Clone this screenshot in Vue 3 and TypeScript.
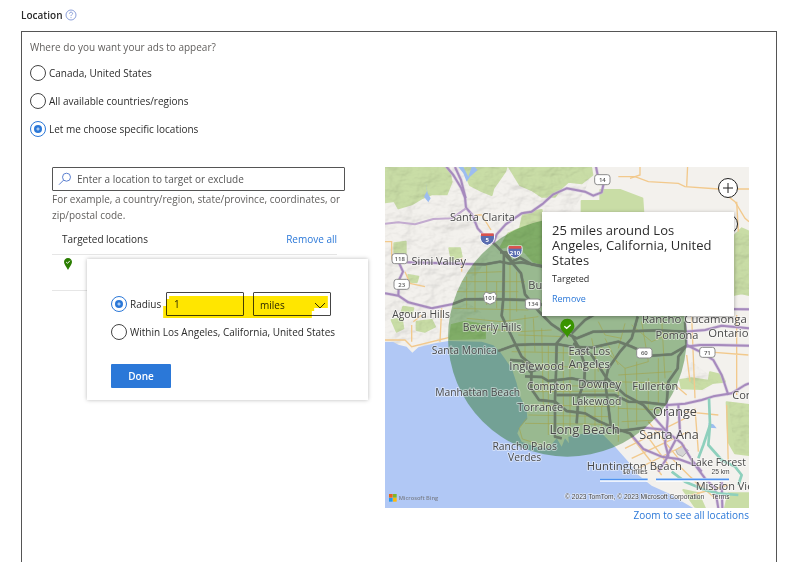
<script setup lang="ts">
import { ref } from 'vue'

type Label = { text: string; x: number; y: number; size: number; anchor?: 'start' | 'middle' }
type Shield = { text: string; x: number; y: number }

const scope = ref<'default' | 'all' | 'specific'>('specific')
const areaType = ref<'radius' | 'within'>('radius')
const query = ref('')
const radius = ref('1')
const unit = ref('miles')

const highways: string[] = [
  'M180 0 L205 30 L228 68 L240 98 L243 128 L262 150 L278 190 L300 215 L332 240 L372 282 L408 325 L420 388 L462 440 L500 478 L540 505',
  'M210 6 L228 45 L242 100',
  'M325 236 L335 208 L362 178 L410 145 L440 140 L475 115 L505 88 L545 70 L600 80 L625 92 L650 82 L655 60 L640 40 L632 0',
  'M65 292 L150 294 L250 297 L300 298 L345 290 L375 296 L410 292 L475 304 L560 320',
  'M43 296 L54 320 L42 345 L40 390',
  'M0 385 L40 392 L70 412 L140 430 L200 418 L240 403 L315 402 L420 405 L475 420 L520 436',
  'M357 262 L355 400 L350 452 L385 525 L410 575 L440 600 L438 670 L462 705 L510 710 L545 738 L600 745 L640 768 L690 790 L735 805 L775 852 L830 875 L880 882 L930 900 L960 940 L990 970 L1000 1030',
  'M340 558 L390 540 L440 538 L520 538 L560 545 L620 548 L700 530 L740 545 L800 572 L860 568 L900 545 L945 540 L1000 540 L1092 542',
  'M545 505 L575 520 L625 500 L760 498 L820 496 L900 500 L960 495 L1010 482 L1092 490',
  'M540 505 L515 535 L513 625 L510 700 L510 815 L530 820',
  'M560 510 L580 545 L600 600 L598 650 L580 700 L575 775',
  'M565 535 L620 570 L665 640 L720 690 L775 720 L810 760 L845 800 L890 835 L920 885 L950 920',
  'M758 455 L740 520 L705 560 L670 610 L660 650 L672 740 L678 790',
  'M900 470 L905 540 L880 575 L878 610 L850 650 L845 715 L848 760 L845 800',
  'M420 634 L470 636 L490 648 L560 640 L610 650 L660 650',
  'M515 690 L600 690 L690 690 L730 710 L780 712 L850 720 L900 716 L950 705 L985 694 L1040 685 L1080 660 L1092 655',
  'M905 540 L945 560 L985 585 L1010 630 L1030 690',
  'M690 800 L780 788 L845 795',
  'M845 795 L840 835 L850 872 L820 920',
  'M880 720 L885 800 L845 875',
  'M560 505 L600 465 L660 430 L780 430 L1092 433',
  'M1010 950 L1012 1030',
  'M345 262 L365 262 L380 290 L405 278 L440 298 L480 306',
  'M375 585 L412 588 L435 620 L470 610',
]
const tollRoads: string[] = [
  'M972 700 L975 780 L955 840 L940 880',
  'M975 780 L970 840 L1010 885 L1050 905 L1070 930 L1060 960',
  'M860 920 L900 950 L960 975 L1000 985 L1060 990',
]
const outerStreets: string[] = [
  'M700 35 L750 35 L790 50 L880 55 L900 65 L1000 72 L1050 110 L1080 160 L1092 170',
  'M765 0 L765 30 L735 40 M908 0 L905 65 M1000 72 L1092 72 M1055 110 L1060 200',
  'M270 150 L290 150 L318 195 M0 230 L20 230 L20 282 L45 282 M230 280 L230 320',
  'M60 320 L75 355 L120 365 M80 480 L80 530 M110 450 L85 470 M170 430 L165 530 M0 525 L60 525 L80 545 L190 518',
  'M905 570 L915 650 M1055 450 L1055 690 M920 455 L930 700 M960 560 L1090 570 M870 660 L905 690',
  'M720 850 L900 760 M740 880 L910 800 M760 910 L900 840 M770 790 L850 900 M735 810 L830 930 M790 770 L880 880',
  'M930 730 L940 860 M900 740 L1000 750 M860 880 L950 970 M910 930 L990 1000 M920 990 L1030 960 M1025 720 L1030 900',
]
const innerStreets: string[] = [
  'M245 335 L245 430 M270 300 L270 440 M305 300 L305 420 M335 350 L335 430 M375 300 L375 470 M395 320 L395 440',
  'M230 325 L350 320 M220 350 L420 350 M210 380 L400 380 M205 430 L430 435 M245 460 L350 470 L460 455 M280 490 L400 500 L500 495',
  'M420 450 L420 600 M445 460 L450 560 M470 490 L475 720 M490 540 L490 810 M535 540 L535 800 M555 560 L555 810',
  'M400 510 L540 515 M380 560 L620 565 M400 600 L660 610 M430 660 L690 665 M440 680 L700 678 M440 720 L690 725 M430 750 L670 755 M420 775 L680 778',
  'M620 520 L640 620 M640 540 L720 610 L790 590 M660 520 L700 600 M600 710 L600 800 M630 610 L630 800 M650 700 L650 790 M700 660 L700 830',
  'M700 630 L860 620 M690 650 L850 655 M700 730 L840 735 M710 770 L830 765 M720 610 L730 790 M755 590 L755 780 M790 640 L790 740 M820 580 L820 720',
  'M740 480 L800 530 L870 500 M770 470 L790 590 M830 460 L840 640 M640 470 L660 510 L710 520 M720 475 L700 550 M425 760 L403 790 L412 822 L470 840',
]
const parks: string[] = [
  'M0 6 L190 6 L200 50 L185 88 L140 88 L110 100 L80 118 L40 130 L28 108 L0 112 Z',
  'M232 6 L365 6 L360 20 L325 70 L320 90 L290 78 L255 60 Z',
  'M372 6 L618 6 L622 30 L590 55 L550 50 L530 68 L510 95 L470 95 L440 75 L405 60 Z',
  'M590 108 L646 108 L646 75 L705 75 L772 100 L775 145 L590 145 Z',
  'M415 143 L470 135 L475 300 L445 290 L420 262 L385 238 L345 250 L370 205 L405 190 Z',
  'M475 145 L760 145 L880 330 L880 400 L760 440 L520 430 L475 340 Z',
  'M1045 215 L1070 190 L1092 200 L1092 390 L1070 385 L1045 390 Z',
  'M28 235 L62 230 L62 265 L42 275 L28 262 Z',
  'M193 250 L225 250 L230 275 L200 285 Z',
  'M70 330 L100 335 L95 352 L72 350 Z',
  'M55 425 L85 430 L80 445 L50 440 Z',
  'M20 465 L50 460 L55 490 L35 500 Z',
  'M95 470 L140 465 L150 485 L120 500 L95 495 Z',
  'M200 480 L240 470 L300 480 L300 520 L195 522 Z',
  'M885 645 L920 640 L990 650 L950 672 L890 670 Z',
  'M975 622 L1010 630 L1020 650 L970 655 Z',
  'M1025 712 L1092 720 L1092 870 L1050 865 L1030 830 Z',
  'M895 975 L940 985 L960 1030 L930 1025 Z',
  'M1030 985 L1092 985 L1092 1030 L1020 1030 Z',
]
const labels: Label[] = [
  { text: 'Santa Clarita', x: 292, y: 167, size: 33 },
  { text: 'Simi Valley', x: 161, y: 299, size: 33 },
  { text: 'Agoura Hills', x: 108, y: 459, size: 31 },
  { text: 'Burbank', x: 430, y: 371, size: 33, anchor: 'start' },
  { text: 'Beverly Hills', x: 321, y: 497, size: 31 },
  { text: 'Santa Monica', x: 238, y: 566, size: 31 },
  { text: 'Inglewood', x: 455, y: 616, size: 34 },
  { text: 'East Los', x: 613, y: 571, size: 33 },
  { text: 'Angeles', x: 613, y: 610, size: 34 },
  { text: 'Manhattan Beach', x: 278, y: 692, size: 31 },
  { text: 'Compton', x: 493, y: 676, size: 31 },
  { text: 'Downey', x: 644, y: 668, size: 34 },
  { text: 'Fullerton', x: 811, y: 676, size: 33 },
  { text: 'Lakewood', x: 635, y: 721, size: 31 },
  { text: 'Torrance', x: 466, y: 739, size: 33 },
  { text: 'Orange', x: 870, y: 752, size: 38 },
  { text: 'Long Beach', x: 599, y: 806, size: 39 },
  { text: 'Santa Ana', x: 852, y: 823, size: 38 },
  { text: 'Rancho Palos', x: 419, y: 854, size: 31 },
  { text: 'Verdes', x: 419, y: 887, size: 31 },
  { text: 'Huntington Beach', x: 748, y: 914, size: 34 },
  { text: 'Lake Forest', x: 1000, y: 902, size: 31 },
  { text: 'Mission Viejo', x: 932, y: 974, size: 33, anchor: 'start' },
  { text: 'Corona', x: 1042, y: 702, size: 33, anchor: 'start' },
  { text: 'Rancho Cucamonga', x: 928, y: 473, size: 34 },
  { text: 'Pomona', x: 876, y: 523, size: 33 },
  { text: 'Ontario', x: 1030, y: 517, size: 34 },
]
const shields: Shield[] = [
  { text: '14', x: 652, y: 44 },
  { text: '118', x: 44, y: 281 },
  { text: '23', x: 50, y: 358 },
  { text: '134', x: 444, y: 417 },
  { text: '60', x: 778, y: 564 },
  { text: '71', x: 967, y: 562 },
]
const interstates: Shield[] = [
  { text: '5', x: 307, y: 221 },
  { text: '210', x: 390, y: 259 },
]
</script>

<template>
  <main class="page">
    <h1 class="title">
      Location
      <svg class="help" viewBox="0 0 12 12" role="img" aria-label="Help">
        <circle cx="6" cy="6" r="5" />
        <path d="M4.4 4.7C4.4 2.6 7.7 2.7 7.6 4.6C7.5 5.7 6 5.8 6 7.1M6 8.2V9.1" />
      </svg>
    </h1>

    <section class="panel">
      <fieldset class="scope">
        <legend>Where do you want your ads to appear?</legend>
        <label class="option"><input v-model="scope" type="radio" name="scope" value="default" />Canada, United States</label>
        <label class="option"><input v-model="scope" type="radio" name="scope" value="all" />All available countries/regions</label>
        <label class="option"><input v-model="scope" type="radio" name="scope" value="specific" />Let me choose specific locations</label>
      </fieldset>

      <div class="columns">
        <div class="picker">
          <label class="search">
            <svg viewBox="0 0 14 14" aria-hidden="true">
              <circle cx="8.5" cy="5.2" r="4" />
              <path d="M5.6 8.1L1 12.7" />
            </svg>
            <input v-model="query" type="text" placeholder="Enter a location to target or exclude" aria-label="Location" />
          </label>
          <p class="hint">For example, a country/region, state/province, coordinates, or zip/postal code.</p>

          <div class="targets">
            <header class="targets-head">
              <span>Targeted locations</span>
              <a href="#">Remove all</a>
            </header>
            <div class="target-row">
              <svg class="mini-pin" viewBox="0 0 8 12" aria-hidden="true">
                <path class="pin-body" d="M4 0C1.700 0 0 1.700 0 4C0 6.500 2.500 8.500 4 12C5.500 8.500 8 6.500 8 4C8 1.700 6.300 0 4 0Z" />
                <path class="pin-check" d="M2.200 4.100L3.500 5.300L5.900 2.800" />
              </svg>
            </div>

            <form class="editor" @submit.prevent>
              <div class="radius-row">
                <label class="option"><input v-model="areaType" type="radio" name="area" value="radius" />Radius</label>
                <input v-model="radius" class="field" type="text" aria-label="Radius distance" />
                <span class="unit">
                  <select v-model="unit" class="field" aria-label="Distance unit">
                    <option value="miles">miles</option>
                    <option value="km">km</option>
                  </select>
                  <svg viewBox="0 0 12 7" aria-hidden="true"><path d="M1 1L6 6L11 1" /></svg>
                </span>
                <svg class="marker" viewBox="0 0 494 66" aria-hidden="true">
                  <path d="M18 0H494V36H453V45H446V66H0V30H9V9H18Z" />
                </svg>
              </div>
              <label class="option"><input v-model="areaType" type="radio" name="area" value="within" />Within Los Angeles, California, United States</label>
              <button class="done" type="submit">Done</button>
            </form>
          </div>
        </div>

        <div class="map-side">
          <div class="map">
            <svg class="map-canvas" viewBox="0 6 1092 1023" preserveAspectRatio="xMidYMid slice" role="img" aria-label="Map of Los Angeles">
              <defs>
                <clipPath id="area-clip"><circle cx="547" cy="517" r="358" /></clipPath>
                <filter id="relief" x="0" y="0" width="100%" height="100%">
                  <feTurbulence type="fractalNoise" baseFrequency="0.014 0.022" numOctaves="4" seed="7" result="n" />
                  <feDiffuseLighting in="n" surfaceScale="22" lighting-color="#ffffff" result="lit">
                    <feDistantLight azimuth="225" elevation="62" />
                  </feDiffuseLighting>
                  <feComposite in="lit" in2="SourceAlpha" operator="in" />
                </filter>
              </defs>
              <rect class="land" x="0" y="0" width="1092" height="1035" />
              <path v-for="d in parks" :key="d" class="park" :d="d" />
              <path class="relief" filter="url(#relief)" d="M0 0H630L600 75L560 145L475 170V320L440 300L380 270L300 290L230 400L300 450V520L190 530L82 563L0 531Z" />
              <path class="relief" filter="url(#relief)" d="M1030 712H1092V870L1050 865ZM890 630L920 590L1000 650L950 680ZM1050 200L1092 210V390H1050Z" />
              <path class="sea" d="M0 531L25 531L40 539L65 545L82 563L100 547L150 535L190 528L290 530L325 541L345 560L380 610L395 655L403 690L425 735L427 762L405 785L397 805L410 830L450 845L490 850L500 838L515 820L530 845L540 820L552 835L550 815L600 805L650 805L690 845L730 890L760 930L800 962L850 985L900 1015L935 1035H0Z" />
              <path class="lake" d="M220 6L235 25L245 50L255 35L278 15L270 6H260L250 35L235 6ZM122 50L126 78L117 95L130 112L137 100L128 85Z" />
              <path class="lake" d="M970 775L985 778L995 790L972 788Z" />
              <path class="airport" d="M872 855L890 843L910 856L893 875L878 868Z" />
              <path v-for="d in outerStreets" :key="d" class="street" :d="d" />
              <path v-for="d in highways" :key="d" class="highway-case" :d="d" />
              <path v-for="d in highways" :key="d" class="highway" :d="d" />
              <path class="highway faint" d="M0 176L40 172L90 178L145 162L200 160L243 130" />
              <path v-for="d in tollRoads" :key="d" class="toll" :d="d" />
              <circle class="area" cx="547" cy="517" r="358" />
              <g clip-path="url(#area-clip)">
                <path v-for="d in innerStreets" :key="d" class="street-in" :d="d" />
                <path v-for="d in highways" :key="d" class="highway-in" :d="d" />
              </g>

              <g v-for="s in shields" :key="s.text" class="shield">
                <rect :x="s.x - 23" :y="s.y - 15" width="46" height="30" rx="8" />
                <text :x="s.x" :y="s.y + 7">{{ s.text }}</text>
              </g>
              <g class="shield">
                <path d="M302 381L315 386L328 381L335 392C330 400 336 408 328 412L315 418L302 412C294 408 300 400 295 392Z" />
                <text x="315" y="406">101</text>
              </g>
              <g v-for="s in interstates" :key="s.text" class="interstate">
                <path class="shield-blue" :d="`M${s.x - 20} ${s.y - 16}H${s.x + 20}C${s.x + 26} ${s.y + 6} ${s.x + 14} ${s.y + 16} ${s.x} ${s.y + 20}C${s.x - 14} ${s.y + 16} ${s.x - 26} ${s.y + 6} ${s.x - 20} ${s.y - 16}Z`" />
                <path class="shield-red" :d="`M${s.x - 19} ${s.y - 16}H${s.x + 19}V${s.y - 8}H${s.x - 19}Z`" />
                <text :x="s.x" :y="s.y + 10">{{ s.text }}</text>
              </g>

              <text
                v-for="l in labels"
                :key="l.text"
                class="place"
                :x="l.x"
                :y="l.y"
                :font-size="l.size"
                :text-anchor="l.anchor ?? 'middle'"
              >{{ l.text }}</text>

              <path class="pin-body" d="M547 461C534 461 526 471 526 484C526 497 540 503 547 518C554 503 568 497 568 484C568 471 560 461 547 461Z" />
              <path class="pin-check big" d="M538 484L545 490L557 479" />

              <path class="scale-back" d="M645 945H788M813 945H1032" />
              <path class="scale" d="M645 943H788M813 943H1032" />
              <text class="small" x="788" y="928" text-anchor="end">10 miles</text>
              <text class="small" x="1034" y="928" text-anchor="end">25 km</text>
              <text class="small" x="540" y="1001">© 2023 TomTom, © 2023 Microsoft Corporation</text>
              <text class="small" x="1034" y="1001" text-anchor="end">Terms</text>
              <rect class="ms-red" x="12" y="987" width="11" height="11" />
              <rect class="ms-green" x="24" y="987" width="11" height="11" />
              <rect class="ms-blue" x="12" y="999" width="11" height="11" />
              <rect class="ms-yellow" x="24" y="999" width="11" height="11" />
              <text class="brand" x="41" y="1006">Microsoft Bing</text>
            </svg>

            <div class="zoom-controls">
              <button type="button" aria-label="Zoom in"><svg viewBox="0 0 10 10"><path d="M5 0V10M0 5H10" /></svg></button>
              <button type="button" aria-label="Zoom out"><svg viewBox="0 0 10 10"><path d="M0 5H10" /></svg></button>
            </div>

            <aside class="popup">
              <h2>25 miles around Los Angeles, California, United States</h2>
              <p>Targeted</p>
              <a href="#">Remove</a>
            </aside>
          </div>
          <a class="zoom-all" href="#">Zoom to see all locations</a>
        </div>
      </div>
    </section>
  </main>
</template>

<style>
body {
  background: #fff;
}
</style>

<style scoped>
* {
  box-sizing: border-box;
}
.page {
  display: flex;
  flex-direction: column;
  min-height: 100vh;
  padding: 7px 21px 0;
  color: #2b2b2b;
  font-family: "Open Sans", "Noto Sans", sans-serif;
  font-size: 10px;
  line-height: 16px;
}
a {
  color: #2b78d8;
  text-decoration: none;
}
input,
select,
button {
  font: inherit;
  color: inherit;
}
.title {
  display: flex;
  align-items: center;
  gap: 2px;
  margin: 0 0 8px;
  font-size: 10px;
  font-weight: 600;
  line-height: 16px;
}
.help {
  width: 12px;
  height: 12px;
  fill: none;
  stroke: #6d86cf;
  stroke-width: 0.8;
}
.panel {
  flex: 1;
  padding: 7px 27px 36px 8px;
  border: 1px solid #555;
  border-bottom: 0;
}
.scope {
  display: flex;
  flex-direction: column;
  gap: 12px;
  margin: 0;
  padding: 0;
  border: 0;
}
.scope legend {
  margin-bottom: 10px;
  padding: 0;
  color: #605e5c;
}
.option {
  display: flex;
  align-items: center;
  gap: 3px;
  white-space: nowrap;
}
.option input {
  display: grid;
  flex: none;
  place-items: center;
  width: 16px;
  height: 16px;
  margin: 0;
  appearance: none;
  border: 1px solid #444;
  border-radius: 50%;
  background: #fff;
}
.option input:checked {
  border-color: #2b78d8;
}
.option input:checked::before {
  width: 8px;
  height: 8px;
  border-radius: 50%;
  background: radial-gradient(circle, #a9c9f0 0 1px, #2b78d8 2px);
  content: "";
}
.columns {
  display: grid;
  grid-template-columns: 293px minmax(0, 1fr);
  gap: 40px;
  margin: 30px 0 0 22px;
}
.search {
  display: flex;
  align-items: center;
  gap: 5px;
  height: 24px;
  padding: 0 5px;
  border: 1px solid #555;
  border-radius: 1px;
}
.search svg {
  width: 14px;
  height: 14px;
  fill: none;
  stroke: #5b7fd0;
}
.search input {
  flex: 1;
  padding: 0;
  border: 0;
  outline: 0;
}
.search input::placeholder {
  color: #555;
  opacity: 1;
}
.hint {
  margin: 0;
  color: #605e5c;
}
.targets {
  position: relative;
  width: 285px;
  margin-top: 8px;
}
.targets-head {
  display: flex;
  justify-content: space-between;
  padding: 0 0 7px 10px;
  border-bottom: 1px solid #e6e6e6;
}
.target-row {
  height: 36px;
  padding: 3px 12px;
  border-bottom: 1px solid #e6e6e6;
}
.mini-pin {
  display: block;
  width: 8px;
  height: 12px;
}
.pin-body {
  fill: #3a9400;
}
.mini-pin .pin-body {
  fill: #2a7d00;
}
.pin-check {
  fill: none;
  stroke: #fff;
}
.pin-check.big {
  stroke-width: 4;
}
.editor {
  position: absolute;
  top: 28px;
  left: 35px;
  display: flex;
  flex-direction: column;
  align-items: flex-start;
  width: 281px;
  padding: 33px 24px 12px;
  background: #fff;
  box-shadow: 0 0 4px rgba(0, 0, 0, 0.28);
}
.radius-row {
  position: relative;
  display: flex;
  align-items: center;
  height: 24px;
  margin-bottom: 8px;
}
.radius-row .option {
  width: 55px;
}
.field {
  width: 78px;
  height: 24px;
  padding: 0 7px;
  appearance: none;
  border: 1px solid #444;
  border-radius: 1px;
  background: #fff;
}
.unit {
  position: relative;
  display: flex;
  margin-left: 9px;
}
.unit .field {
  padding: 2px 6px 0;
}
.unit svg {
  position: absolute;
  top: 10px;
  right: 5px;
  width: 12px;
  height: 7px;
  fill: none;
  stroke: #333;
  pointer-events: none;
}
.marker {
  position: absolute;
  top: 4px;
  right: 3px;
  width: 165px;
  height: 22px;
  fill: #ffe600;
  mix-blend-mode: multiply;
  pointer-events: none;
}
.done {
  width: 60px;
  height: 24px;
  margin-top: 24px;
  padding: 0;
  border: 0;
  border-radius: 1px;
  background: #2b78d8;
  color: #fff;
  font-weight: 600;
}
.map-side {
  display: flex;
  flex-direction: column;
  align-items: flex-end;
}
.map {
  position: relative;
  width: 100%;
  aspect-ratio: 364 / 341;
  overflow: hidden;
}
.map-canvas {
  display: block;
  width: 100%;
  height: 100%;
}
.land { fill: #f3f1ed; }
.park { fill: #c9dda6; stroke: #c9dda6; stroke-width: 6; stroke-linejoin: round; }
.relief { mix-blend-mode: multiply; opacity: 0.18; }
.sea { fill: #b1c8f5; }
.lake { fill: #9cbdf0; }
.airport { fill: #d5d5d5; stroke: #999; stroke-width: 2; }
.street { fill: none; stroke: #f2c98c; stroke-width: 4; }
.street-in { fill: none; stroke: #a1a54d; stroke-width: 3; opacity: 0.65; }
.highway-case { fill: none; stroke: #cbbbd9; stroke-width: 10; stroke-linejoin: round; }
.highway { fill: none; stroke: #a68abd; stroke-width: 6; stroke-linejoin: round; }
.highway.faint { stroke: #c3abd0; }
.highway-in { fill: none; stroke: #6c7b68; stroke-width: 7; stroke-linejoin: round; }
.toll { fill: none; stroke: #8ed0bd; stroke-width: 8; stroke-linejoin: round; }
.area { fill: #1c6b10; opacity: 0.42; }
.highway-case { opacity: 0.6; }
.place {
  fill: #4a4a4a;
  stroke: rgba(255, 255, 255, 0.45);
  stroke-width: 6;
  stroke-linejoin: round;
  paint-order: stroke;
}
.shield rect,
.shield path { fill: #fff; stroke: #8c8c8c; stroke-width: 3; }
.shield text { fill: #555; font-size: 18px; font-weight: 600; text-anchor: middle; }
.shield-blue { fill: #5a6db0; stroke: #fff; stroke-width: 3; }
.shield-red { fill: #d9534f; }
.interstate text { fill: #fff; font-size: 18px; font-weight: 700; text-anchor: middle; }
.scale-back { stroke: #fff; stroke-width: 10; }
.scale { stroke: #4f93f0; stroke-width: 5; }
.small {
  fill: #444;
  stroke: rgba(255, 255, 255, 0.6);
  stroke-width: 4;
  paint-order: stroke;
  font-family: "Liberation Sans", sans-serif;
  font-size: 20px;
}
.brand { fill: #7a7f8a; font-size: 17px; font-weight: 600; }
.ms-red { fill: #e8641b; }
.ms-green { fill: #7db728; }
.ms-blue { fill: #2799e6; }
.ms-yellow { fill: #fbb80a; }
.zoom-controls {
  position: absolute;
  top: 11px;
  right: 11px;
  display: flex;
  flex-direction: column;
  gap: 16px;
}
.zoom-controls button {
  display: grid;
  place-items: center;
  width: 20px;
  height: 20px;
  padding: 0;
  border: 1px solid #222;
  border-radius: 50%;
  background: #fff;
}
.zoom-controls svg {
  width: 10px;
  height: 10px;
  stroke: #222;
}
.popup {
  position: absolute;
  top: 45px;
  right: 15px;
  width: 192px;
  padding: 11px 10px 9px;
  background: #fff;
  box-shadow: 0 1px 4px rgba(0, 0, 0, 0.35);
}
.popup h2 {
  margin: 0 0 3px;
  padding-right: 8px;
  font-size: 13px;
  font-weight: 400;
  line-height: 15px;
}
.popup p {
  margin: 0 0 4px;
  font-size: 9px;
}
.popup a {
  display: block;
  font-size: 9px;
}
.zoom-all {
  line-height: 15px;
}
</style>
